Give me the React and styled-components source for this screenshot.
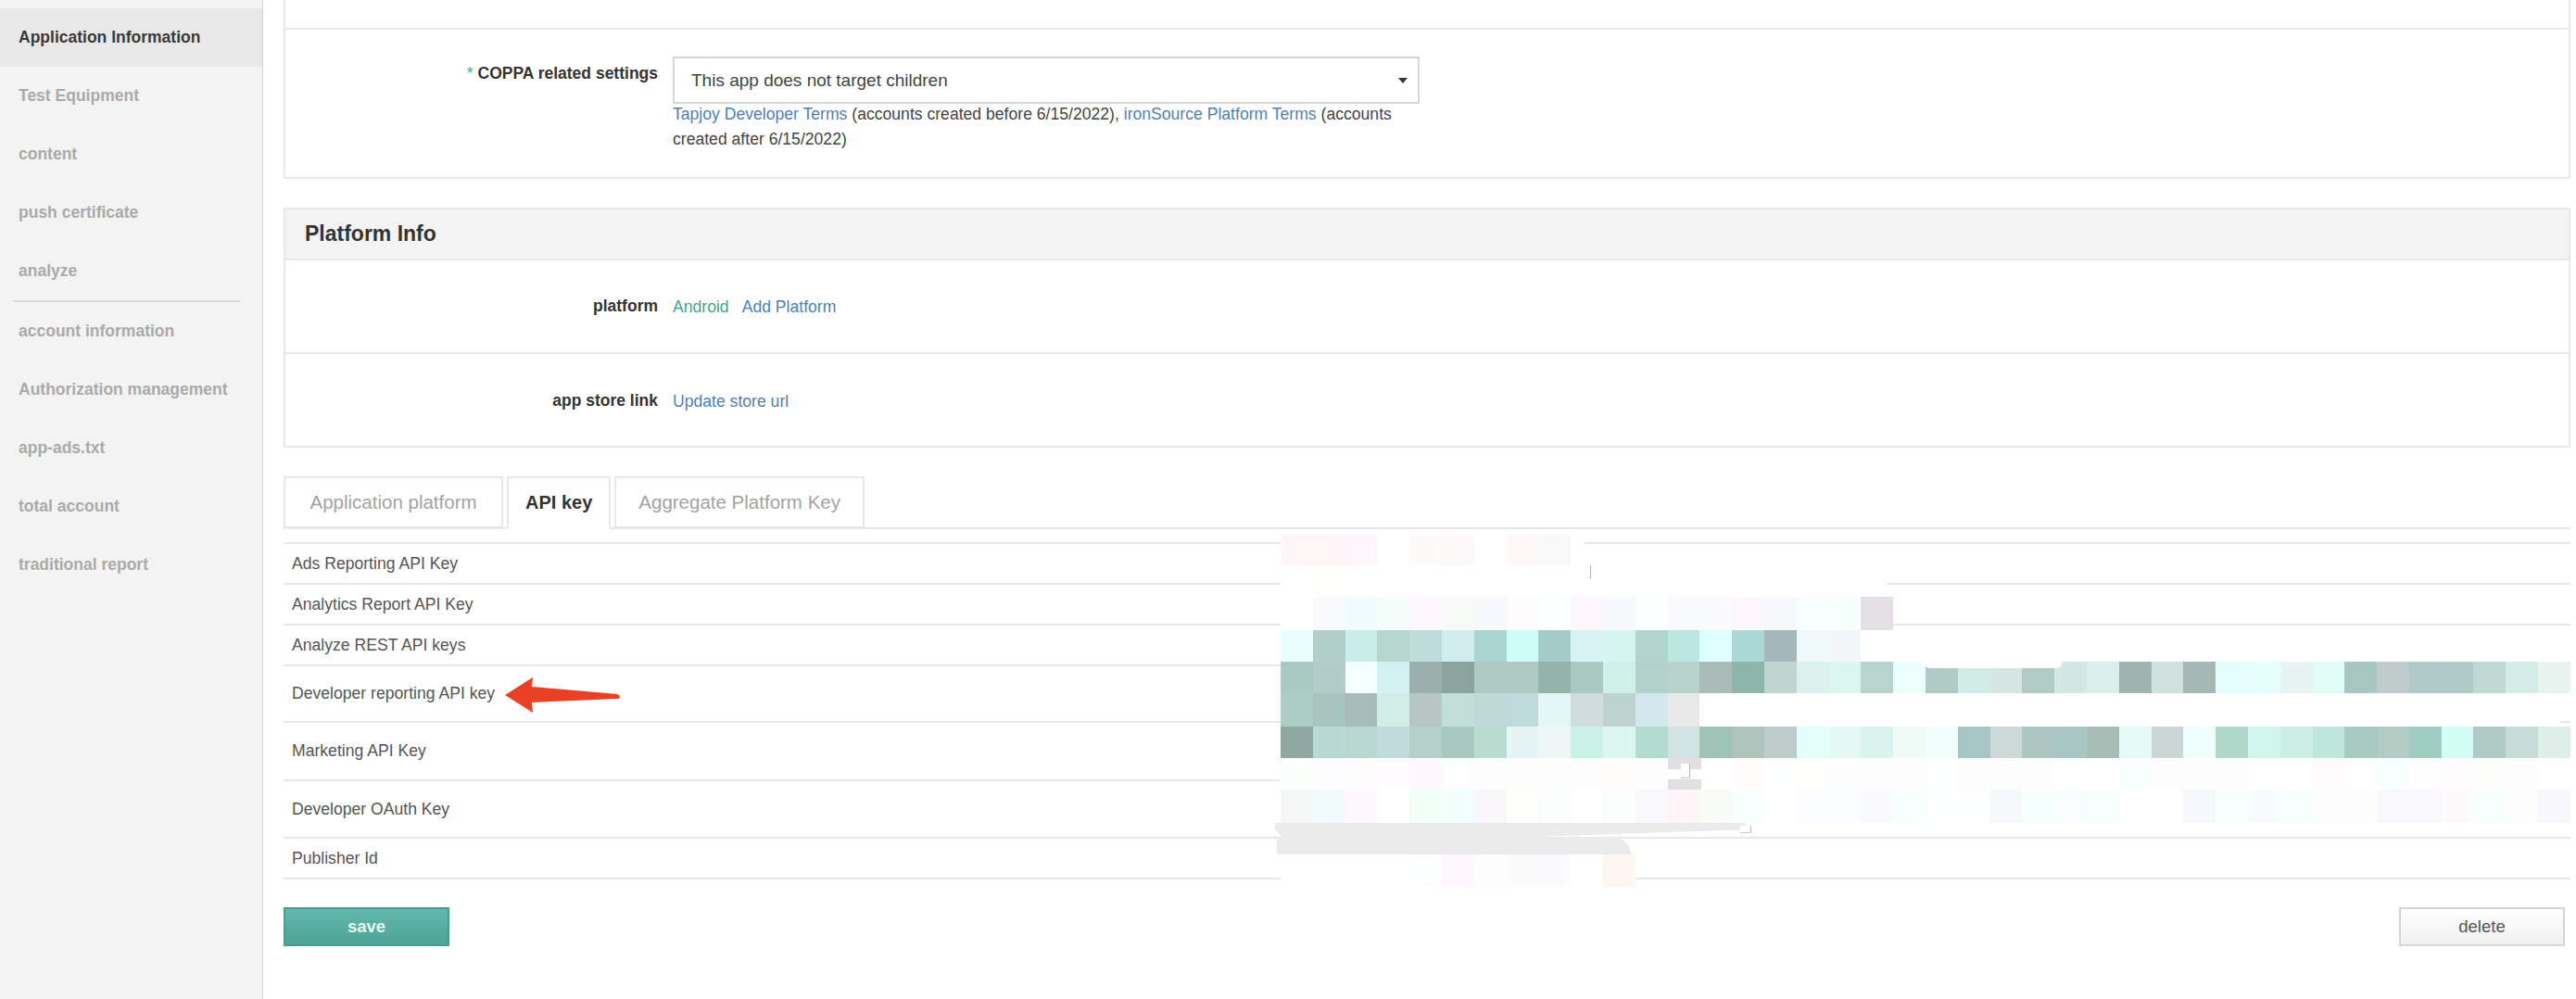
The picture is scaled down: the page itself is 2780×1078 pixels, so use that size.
import React from "react";
import styled, { createGlobalStyle } from "styled-components";

const CELL = 34.8;

const menuTop = ["Application Information", "Test Equipment", "content", "push certificate", "analyze"];
const menuBottom = ["account information", "Authorization management", "app-ads.txt", "total account", "traditional report"];

const apiRows = [
    { label: "Ads Reporting API Key", h: 44 },
    { label: "Analytics Report API Key", h: 44 },
    { label: "Analyze REST API keys", h: 44 },
    { label: "Developer reporting API key", h: 61, arrow: true },
    { label: "Marketing API Key", h: 63 },
    { label: "Developer OAuth Key", h: 62 },
    { label: "Publisher Id", h: 44 },
];

// blurred out key values, one array per row of the mosaic
const mosaic = [
    { h: 33, w: 328, cells: ["fff6f7", "fff6f7", "fdf6fb", "ffffff", "fcfbfa", "fef9f9", "ffffff", "fff8f6", "f8f9f8"] },
    { h: 34, w: 654, cells: ["ffffff", "fffffb", "ffffff"] },
    { h: 36, w: 660, cells: ["ffffff", "f8fafc", "f0fbfd", "f4fffb", "fef8fe", "f7faf7", "f6f8fc", "fffdfb", "fbffff", "fdf6fc", "f5f9fa", "faffff", "f8fafc", "fafbfc", "fdf6fb", "f6f8fa", "f8fdff", "f7fffd", "e3e1e5"] },
    { h: 34, w: 660, cells: ["eaffff", "b0cfc9", "c9eeea", "b5d5cd", "bedcda", "d0eced", "aad4ce", "cefdf5", "a5cbc7", "d6f2f1", "d5f6f0", "b2d4cf", "bce7e0", "e0ffff", "abd8d4", "a5b8b9", "f0f8fa", "f2f6f8"] },
    { h: 34, w: 1390, cells: ["aac9c2", "b2cdc9", "f5ffff", "d2f1f0", "9bafac", "8aa49d", "afcac4", "afc9c4", "93b3ab", "a9c9c2", "d0f1ea", "b1d1ca", "b8d2cc", "a9bcb8", "8eb5aa", "bfd5d0", "dcf1ee", "d9f6ef", "b8d5cd", "edfffb", "aecbc4", "cfece7", "d5e6e3", "b1ccc4", "d1e8e3", "d9efea", "a0b5b0", "d0e0dc", "a6b8b4", "e4fffb", "e6fffb", "e8f4f4", "e0fdf5", "a8c7c0", "c0cccb", "b0cbc7", "b0cbc7", "c0d9d3", "d3ece6", "e9f4f1"] },
    { h: 36, w: 1381, cells: ["abcdc4", "a8c4be", "a8bab9", "d2ece7", "b5c6c5", "c3ded7", "bfdad6", "bfdada", "e3f8f6", "d0dcdd", "bcd2cd", "d3e8ed", "e8e8e8"] },
    { h: 34, w: 1386, cells: ["8fa8a2", "b9dad4", "b9d8d1", "c0dbdc", "b5d0c8", "a9c8c0", "b9dbd0", "e5f4f4", "eff6f8", "c8f3e6", "dbf6f0", "b2dcd0", "d0e3e1", "a0c3b8", "aec3bc", "bccdc9", "e2fffa", "e4f9f4", "dcf4ee", "eefbf7", "f0fffd", "a6c6c6", "ccd9d8", "adc6c2", "a9c7c2", "a9bdb7", "e5fbf8", "ccd6d4", "effffe", "afd8ca", "d0f6ed", "cdeee6", "bfe8dc", "a7cbc3", "b3cdc5", "9fcdc1", "d2fef3", "afcbc6", "c6dcd9", "deeee8"] },
    { h: 34, w: 1383, cells: ["fbfffc", "fdfcfe", "fefcfd", "fefcfe", "fff8fe", "fdffff", "fdfdfe", "fdfdfe", "fdfdfe", "fefdfd", "fefdfb", "fdfdfe", "ffffff", "ffffff", "fffdfb", "fdffff", "fefefc", "fdfdfd", "fdfdfd", "fdfdfd", "fcfffe", "fdfdfd", "fefdfd", "fefdfd", "ffffff", "ffffff", "f9fffe", "fdfdfe", "fdfdfe", "fdfdfe", "ffffff", "ffffff", "fffafb", "fcfffe", "f9ffff", "fffdfe", "fffbfe", "fdfefa", "fdfdfd", "ffffff"] },
    { h: 36, w: 1388, cells: ["f5f8f6", "f1fbfc", "fff8fe", "ffffff", "f2fff9", "f3fffc", "f9f7fa", "fdfffb", "fafffe", "ffffff", "fcfdfd", "f9f9fd", "fff5f8", "f9fbf7", "f7ffff", "ffffff", "fbfcfe", "f9fdfd", "f8fafd", "f8ffff", "fdfffe", "fdfffe", "f6f9f9", "f8ffff", "f9fdff", "f8ffff", "ffffff", "ffffff", "f6f9f9", "f9ffff", "f8fcfe", "f7ffff", "fdfdfd", "fdfdfd", "f9f8fd", "f9f8fd", "fdfafb", "f8ffff", "fdfdfd", "f8f7fc"] },
    { h: 16, w: 508, shift: -6, tone: "ebebeb", clip: "polygon(0 0, 100% 0, 100% 45%, 50% 100%, 8px 100%, 0 40%)", cells: [] },
    { h: 18, w: 382, shift: -4, tone: "ebebeb", round: true, cells: [] },
    { h: 35, w: 380, cells: ["ffffff", "ffffff", "ffffff", "ffffff", "fbfffe", "fef8fe", "fdfdfb", "fcfbfc", "fbfbfe", "ffffff", "fff6f3"] },
];

function App() {
    return (
        <>
            <GlobalStyle />
            <Page>
                <Sidebar>
                    {menuTop.map((item, i) => (
                        <MenuItem key={item} $active={i === 0}>{item}</MenuItem>
                    ))}
                    <MenuDivider />
                    {menuBottom.map((item) => (
                        <MenuItem key={item}>{item}</MenuItem>
                    ))}
                </Sidebar>

                <Main>
                    <Panel $noTop>
                        <BlankRow />
                        <FormRow $h={159} $top={29}>
                            <FormLabel $top={8}><Star>*</Star> COPPA related settings</FormLabel>
                            <FormValue>
                                <SelectBox>
                                    This app does not target children
                                    <Caret />
                                </SelectBox>
                                <Help>
                                    <BlueLink>Tapjoy Developer Terms</BlueLink> (accounts created before 6/15/2022), <BlueLink>ironSource Platform Terms</BlueLink> (accounts created after 6/15/2022)
                                </Help>
                            </FormValue>
                        </FormRow>
                    </Panel>

                    <PlatformPanel>
                        <PanelHeader>Platform Info</PanelHeader>
                        <FormRow $h={101} $top={32} $line>
                            <FormLabel $top={7}>platform</FormLabel>
                            <FormValue $top={8}>
                                <TealLink>Android</TealLink>
                                <BlueLink>Add Platform</BlueLink>
                            </FormValue>
                        </FormRow>
                        <FormRow $h={99} $top={33}>
                            <FormLabel $top={7}>app store link</FormLabel>
                            <FormValue $top={8}>
                                <BlueLink>Update store url</BlueLink>
                            </FormValue>
                        </FormRow>
                    </PlatformPanel>

                    <Tabs>
                        <Tab $pad={26.5}>Application platform</Tab>
                        <Tab $pad={18} $active>API key</Tab>
                        <Tab $pad={24}>Aggregate Platform Key</Tab>
                    </Tabs>

                    <KeyTable>
                        {apiRows.map((row) => (
                            <KeyRow key={row.label} $h={row.h}>
                                {row.label}
                                {row.arrow && (
                                    <Arrow viewBox="0 0 124 40" width="124" height="40">
                                        <path d="M0 19 L30 0 L29 10 L121 18 Q124 19 124 21 Q124 23 121 23 L29 27 L30 38 Z" fill="#ea4025" />
                                    </Arrow>
                                )}
                            </KeyRow>
                        ))}
                    </KeyTable>

                    <Actions>
                        <SaveButton>save</SaveButton>
                        <DeleteButton>delete</DeleteButton>
                    </Actions>
                </Main>

                <Redaction>
                    {mosaic.map((row, i) => (
                        <MosaicRow key={i} $h={row.h} $w={row.w} $shift={row.shift} $tone={row.tone} $clip={row.clip} $round={row.round}>
                            {row.cells.map((c, j) => (
                                <MosaicCell key={j} $color={c} />
                            ))}
                        </MosaicRow>
                    ))}
                    <WhiteStrip />
                    <CropMark $x={333} $y={33} $w={2} $h={14} />
                    <CropMark $x={418} $y={241} $w={36} $h={12} $fill />
                    <CropMark $x={418} $y={264} $w={36} $h={11} $fill />
                    <CropMark $x={432} $y={247} $w={10} $h={16} />
                    <CropMark $x={496} $y={314} $w={12} $h={8} />
                </Redaction>
            </Page>
        </>
    );
}

const GlobalStyle = createGlobalStyle`
    * {
        box-sizing: border-box;
    }
    body {
        margin: 0;
        background: #ffffff;
        font-family: "Liberation Sans", Arial, sans-serif;
        color: #333333;
    }
`;

const Page = styled.div`
    position: relative;
    display: flex;
    height: 1078px;
    overflow: hidden;
`;

const Sidebar = styled.nav`
    width: 284px;
    flex-shrink: 0;
    padding-top: 9px;
    background: #f3f3f3;
    border-right: 1px solid #d4d4d4;
`;

const MenuItem = styled.div`
    display: flex;
    align-items: center;
    height: 63px;
    padding-left: 20px;
    font-size: 17.5px;
    font-weight: 700;
    color: ${(p) => (p.$active ? "#3a3a3a" : "#aaaaaa")};
    background: ${(p) => (p.$active ? "#e8e8e8" : "transparent")};
`;

const MenuDivider = styled.div`
    height: 2px;
    margin: 0 24px 0 14px;
    background: #d9d9d9;
`;

const Main = styled.main`
    flex: 1;
    min-width: 0;
    padding: 0 6px 0 22px;
`;

const Panel = styled.section`
    border: 2px solid #e8e8e8;
    border-top: ${(p) => (p.$noTop ? "0" : "2px solid #e8e8e8")};
    background: #ffffff;
`;

const PlatformPanel = styled(Panel)`
    margin-top: 31px;
`;

const BlankRow = styled.div`
    height: 32px;
    border-bottom: 2px solid #e8e8e8;
`;

const PanelHeader = styled.h3`
    display: flex;
    align-items: center;
    height: 55px;
    margin: 0;
    padding-left: 21px;
    font-size: 23px;
    font-weight: 700;
    color: #333333;
    background: #f3f3f3;
    border-bottom: 2px solid #e8e8e8;
`;

const FormRow = styled.div`
    display: flex;
    gap: 16px;
    height: ${(p) => p.$h}px;
    padding-top: ${(p) => p.$top}px;
    border-bottom: ${(p) => (p.$line ? "2px solid #e8e8e8" : "0")};
`;

const FormLabel = styled.label`
    width: 402px;
    flex-shrink: 0;
    padding-top: ${(p) => p.$top}px;
    text-align: right;
    font-size: 17.5px;
    font-weight: 700;
    color: #333333;
`;

const Star = styled.span`
    color: #4aa89b;
    font-weight: 400;
`;

const FormValue = styled.div`
    width: 806px;
    padding-top: ${(p) => p.$top || 0}px;
    font-size: 17.6px;
`;

const SelectBox = styled.div`
    position: relative;
    display: flex;
    align-items: center;
    height: 51px;
    padding-left: 18px;
    border: 2px solid #d6d6d6;
    font-size: 19px;
    color: #444444;
`;

const Caret = styled.span`
    position: absolute;
    right: 11px;
    top: 21px;
    border-left: 5px solid transparent;
    border-right: 5px solid transparent;
    border-top: 6px solid #333333;
`;

const Help = styled.p`
    margin: -2px 0 0;
    font-size: 17.6px;
    line-height: 27px;
    color: #444444;
`;

const BlueLink = styled.a`
    color: #4f7fb5;
`;

const TealLink = styled.a`
    margin-right: 14px;
    color: #3ba597;
`;

const Tabs = styled.div`
    display: flex;
    gap: 4px;
    height: 57px;
    margin-top: 31px;
    border-bottom: 2px solid #e8e8e8;
`;

const Tab = styled.div`
    display: flex;
    align-items: center;
    height: ${(p) => (p.$active ? "57px" : "56px")};
    padding: 0 ${(p) => p.$pad}px;
    border: 2px solid #e8e8e8;
    border-bottom: ${(p) => (p.$active ? "2px solid #ffffff" : "2px solid #e8e8e8")};
    font-size: ${(p) => (p.$active ? "20px" : "20.5px")};
    font-weight: ${(p) => (p.$active ? 700 : 400)};
    color: ${(p) => (p.$active ? "#333333" : "#a3a3a3")};
    background: #ffffff;
`;

const KeyTable = styled.div`
    margin-top: 14px;
    border-top: 2px solid #e8e8e8;
`;

const KeyRow = styled.div`
    position: relative;
    display: flex;
    align-items: center;
    height: ${(p) => p.$h}px;
    padding-left: 9px;
    border-bottom: 2px solid #e8e8e8;
    font-size: 17.6px;
    color: #555555;
`;

const Arrow = styled.svg`
    position: absolute;
    left: 239px;
    top: 12px;
`;

const Actions = styled.div`
    display: flex;
    justify-content: space-between;
    margin-top: 30px;
    padding-right: 6px;
`;

const SaveButton = styled.button`
    width: 179px;
    height: 42px;
    border: 2px solid #4a9c90;
    background: linear-gradient(#62b8ac, #4ca396);
    color: #e6f6f3;
    font-family: inherit;
    font-size: 18.5px;
    font-weight: 700;
`;

const DeleteButton = styled.button`
    width: 179px;
    height: 42px;
    border: 2px solid #d4d4d4;
    background: linear-gradient(#ffffff, #f0f0f0);
    color: #555555;
    font-family: inherit;
    font-size: 18.5px;
`;

const Redaction = styled.div`
    position: absolute;
    left: 1382px;
    top: 577px;
`;

const MosaicRow = styled.div`
    display: flex;
    height: ${(p) => p.$h}px;
    width: ${(p) => p.$w}px;
    margin-left: ${(p) => p.$shift || 0}px;
    background: ${(p) => (p.$tone ? `#${p.$tone}` : "#ffffff")};
    clip-path: ${(p) => p.$clip || "none"};
    border-radius: ${(p) => (p.$round ? "8px 30px 0 0" : "0")};
`;

const MosaicCell = styled.div`
    flex: 0 0 ${CELL}px;
    height: 100%;
    background: #${(p) => p.$color};
`;

const WhiteStrip = styled.span`
    position: absolute;
    left: 694px;
    top: 137px;
    width: 150px;
    height: 7px;
    background: #ffffff;
    border-radius: 0 0 60px 60px;
`;

const CropMark = styled.span`
    position: absolute;
    left: ${(p) => p.$x}px;
    top: ${(p) => p.$y}px;
    width: ${(p) => p.$w}px;
    height: ${(p) => p.$h}px;
    background: ${(p) => (p.$fill ? "#e2dee2" : "#ffffff")};
    border-right: ${(p) => (p.$fill ? "0" : "1px solid #b4b4bc")};
    border-bottom: ${(p) => (p.$fill ? "0" : "1px solid #c8c8d0")};
`;

export default App;
